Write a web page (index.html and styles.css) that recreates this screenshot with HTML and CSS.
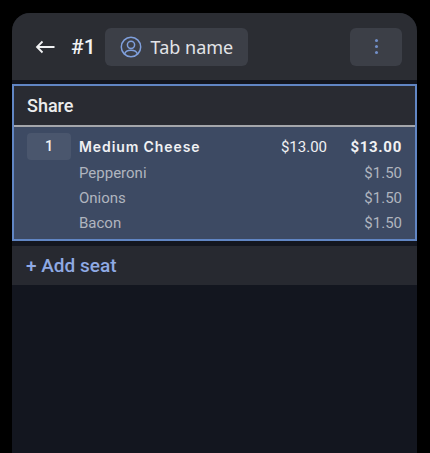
FILE: index.html
```html
<!DOCTYPE html>
<html lang="en">
<head>
    <meta charset="UTF-8">
    <meta name="viewport" content="width=device-width, initial-scale=1.0">
    <title>Tab</title>
    <link rel="stylesheet" href="styles.css">
</head>
<body>
    <div class="panel">
        <div class="top-bar">
            <svg class="back-icon" width="20" height="14" viewBox="0 0 20 14">
                <path d="M7.5 1.5 L2 7 L7.5 12.5 M2 7 H19.5" fill="none" stroke="#f1f2f4" stroke-width="1.8"/>
            </svg>
            <div class="order-no">#1</div>
            <div class="tab-name">
                <svg width="22" height="22" viewBox="0 0 22 22">
                    <g fill="none" stroke="#7f9fdc" stroke-width="1.5">
                        <circle cx="11" cy="11" r="9.7"/>
                        <circle cx="11" cy="8.8" r="3.6"/>
                        <path d="M4.6 18 C5.4 15 8 14.2 11 14.2 C14 14.2 16.6 15 17.4 18"/>
                    </g>
                </svg>
                <span>Tab name</span>
            </div>
            <div class="more-btn">
                <span class="dot"></span>
                <span class="dot"></span>
                <span class="dot"></span>
            </div>
        </div>

        <div class="seat">
            <div class="seat-title">Share</div>
            <div class="items">
                <div class="item-row">
                    <div class="qty">1</div>
                    <div class="item-name">Medium Cheese</div>
                    <div class="unit-price">$13.00</div>
                    <div class="total-price">$13.00</div>
                </div>
                <div class="mod-row"><span>Pepperoni</span><span class="mod-price">$1.50</span></div>
                <div class="mod-row"><span>Onions</span><span class="mod-price">$1.50</span></div>
                <div class="mod-row"><span>Bacon</span><span class="mod-price">$1.50</span></div>
            </div>
        </div>

        <div class="add-seat">+ Add seat</div>
        <div class="empty"></div>
    </div>
</body>
</html>
```

FILE: styles.css
```css
body {
    margin: 0;
    height: 453px;
    overflow: hidden;
    background-color: #000;
    font-family: Roboto, "Liberation Sans", sans-serif;
}
.panel {
    display: flex;
    flex-direction: column;
    width: 405px;
    height: 440px;
    margin: 13px 0 0 12px;
    background-color: #13161f;
    border-radius: 18px 18px 0 0;
    overflow: hidden;
}
.top-bar {
    display: flex;
    align-items: center;
    flex-shrink: 0;
    height: 67px;
    padding: 0 15px 0 23px;
    box-sizing: border-box;
    background-color: #2b2d33;
}
.back-icon {
    flex-shrink: 0;
}
.order-no {
    margin-left: 16px;
    color: #f1f2f4;
    font-size: 21px;
    font-weight: 500;
}
.tab-name {
    display: flex;
    align-items: center;
    gap: 9px;
    height: 38px;
    margin-left: 9px;
    padding: 0 15px;
    background-color: #3c3f47;
    border-radius: 6px;
    color: #e3e4e8;
    font-family: "Noto Sans", sans-serif;
    font-size: 18px;
}
.more-btn {
    display: flex;
    flex-direction: column;
    align-items: center;
    justify-content: center;
    gap: 3px;
    width: 52px;
    height: 38px;
    margin-left: auto;
    background-color: #3c3f47;
    border-radius: 6px;
}
.dot {
    width: 3px;
    height: 3px;
    background-color: #728fc8;
    border-radius: 50%;
}
.seat {
    margin-top: 4px;
    border: 2px solid #6186c4;
    flex-shrink: 0;
}
.seat-title {
    height: 39px;
    padding-left: 13px;
    line-height: 39px;
    background-color: #292b32;
    color: #eceded;
    font-size: 18px;
    font-weight: 500;
    border-bottom: 2px solid #a4a6ab;
}
.items {
    padding: 6px 13px 4px;
    background-color: #3d4a63;
}
.item-row {
    display: flex;
    align-items: center;
    height: 27px;
    color: #f0f1f3;
    font-size: 14.5px;
}
.qty {
    width: 44px;
    height: 27px;
    margin-right: 8px;
    line-height: 27px;
    text-align: center;
    background-color: #4a566d;
    border-radius: 4px;
    font-weight: 500;
}
.item-name {
    font-family: Inter, Roboto, sans-serif;
    font-size: 14px;
    font-weight: 600;
    letter-spacing: 0.9px;
}
.unit-price {
    margin-left: auto;
    font-size: 15px;
}
.total-price {
    width: 75px;
    text-align: right;
    font-size: 15px;
    font-weight: 700;
    letter-spacing: 0.7px;
}
.mod-row {
    display: flex;
    justify-content: space-between;
    align-items: center;
    height: 25px;
    padding-left: 52px;
    color: #b0b5bf;
    font-size: 15px;
}
.add-seat {
    flex-shrink: 0;
    height: 39px;
    margin-top: 5px;
    padding-left: 14px;
    line-height: 39px;
    background-color: #272930;
    color: #8faae4;
    font-size: 19px;
    font-weight: 500;
}
.empty {
    flex: 1;
}
```
